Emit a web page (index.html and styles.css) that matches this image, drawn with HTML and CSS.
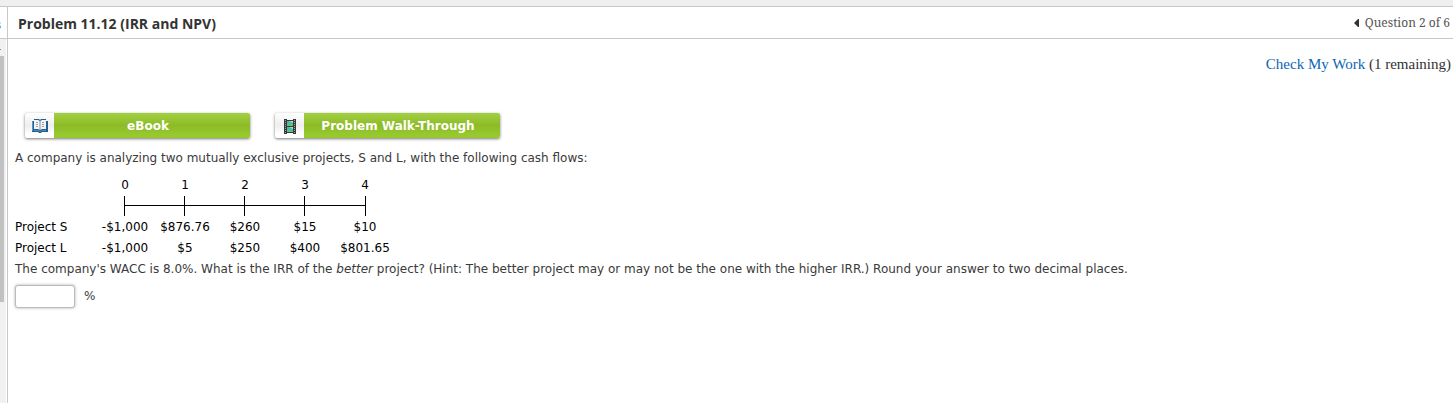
FILE: index.html
```html
<!DOCTYPE html>
<html lang="en">
<head>
<meta charset="utf-8">
<title>Problem 11.12 (IRR and NPV)</title>
<link rel="stylesheet" href="styles.css">
</head>
<body>
<div class="strip"></div>
<div class="frame">
  <aside class="side">
    <div class="side-head"><a href="#" class="side-link">s</a></div>
    <div class="side-track"><div class="side-mark"></div><div class="side-thumb"></div></div>
  </aside>
  <main class="main">
    <header class="head">
      <h1 class="title">Problem 11.12 (IRR and NPV)</h1>
      <nav class="pager">
        <svg class="arrow" width="5" height="8" viewBox="0 0 5 8"><path d="M0 4 4 0H5V8H4Z" fill="#333"/></svg>
        <span>Question 2 of 6</span>
      </nav>
    </header>
    <div class="check"><a href="#" class="check-link">Check My Work</a> (1 remaining)</div>
    <div class="content">
      <div class="actions">
        <button class="action" type="button">
          <span class="action-icon">
            <svg width="16" height="14" viewBox="0 0 16 14">
              <path d="M0 2H2V0H7L8 1 9 0H14V2H16V13H10L9 14H7L6 13H0Z" fill="#235f92"/>
              <path d="M0 2H1V12H0Z" fill="#5b94c0"/>
              <path d="M2 1H6L8 2V11L6 10H2ZM14 1H10L8 2V11L10 10H14Z" fill="#f2f3f4"/>
              <path d="M4 3.500H6M4 5.500H6M4 7.500H6M10 3.500H12M10 5.500H12M10 7.500H12" stroke="#9da1a7"/>
              <path d="M8 2V11" stroke="#8b929b"/>
              <path d="M2 11.500H6L8 12.500 10 11.500H14" fill="none" stroke="#4d88b6"/>
            </svg>
          </span>
          <span class="action-label">eBook</span>
        </button>
        <button class="action" type="button">
          <span class="action-icon">
            <svg width="12" height="15" viewBox="0 0 12 15">
              <path d="M0 0H3V1H9V0H12V15H9V14H3V15H0Z" fill="#3c3838"/>
              <path d="M3 2H9V7H3ZM3 8H9V13H3Z" fill="#45aee6"/>
              <path d="M3 5 5 4 9 6V7H3ZM3 11 5 10 9 12V13H3Z" fill="#4fcf62"/>
              <path d="M5 2H9V4ZM5 8H9V10Z" fill="#c3e36a"/>
              <path d="M1.500 1V14M10.500 1V14" stroke="#a09b9b" stroke-dasharray="1 1"/>
            </svg>
          </span>
          <span class="action-label">Problem Walk-Through</span>
        </button>
      </div>
      <p class="text">A company is analyzing two mutually exclusive projects, S and L, with the following cash flows:</p>
      <table class="flows">
        <thead>
          <tr><td></td><th>0</th><th>1</th><th>2</th><th>3</th><th>4</th></tr>
        </thead>
        <tbody>
          <tr class="axis"><td></td><td colspan="5">
            <svg class="line" width="300" height="21" viewBox="0 0 300 21" shape-rendering="crispEdges"><path d="M29 9.500H271M29.500 0V20M89.500 0V20M149.500 0V20M209.500 0V20M270.500 0V20" stroke="#000" fill="none"/></svg>
          </td></tr>
          <tr><th class="name">Project S</th><td>-$1,000</td><td>$876.76</td><td>$260</td><td>$15</td><td>$10</td></tr>
          <tr><th class="name">Project L</th><td>-$1,000</td><td>$5</td><td>$250</td><td>$400</td><td>$801.65</td></tr>
        </tbody>
      </table>
      <p class="text">The company's WACC is 8.0%. What is the IRR of the <em>better</em> project? (Hint: The better project may or may not be the one with the higher IRR.) Round your answer to two decimal places.</p>
      <div class="answer"><input class="box" id="irr" type="text" aria-label="IRR"><label for="irr">%</label></div>
    </div>
  </main>
</div>
</body>
</html>
```
FILE: styles.css
```css
* { box-sizing: border-box; }
body {
  margin: 0;
  min-height: 100vh;
  display: flex;
  flex-direction: column;
  background: #fff;
  color: #3a3a3a;
  font: 12px/21px Verdana, "DejaVu Sans", sans-serif;
}
.strip { height: 7px; background: #efefef; border-bottom: 1px solid #c8c8c8; }
.frame { flex: 1; display: flex; }
.side {
  flex: none;
  width: 8px;
  border-right: 1px solid #c8c8c8;
  display: flex;
  flex-direction: column;
}
.side-head {
  height: 32px;
  border-bottom: 1px solid #c8c8c8;
  display: flex;
  justify-content: flex-end;
  padding-right: 6px;
  overflow: hidden;
}
.side-link { color: #1a4f8b; font: bold 13px/34px "Open Sans", sans-serif; text-decoration: none; }
.side-track { flex: 1; width: 6px; background: #f1f1f1; padding-top: 10px; }
.side-mark { width: 1px; height: 1px; background: #888; margin-bottom: 6px; }
.side-thumb { width: 4px; height: 246px; background: #c1c1c1; }
.main { flex: 1; min-width: 0; }
.head {
  height: 32px;
  border-bottom: 1px solid #c8c8c8;
  display: flex;
  justify-content: space-between;
  padding: 0 3px 0 10px;
}
.title { margin: 0; font: bold 14px/33px "Open Sans", sans-serif; color: #333; }
.pager { display: flex; align-items: center; gap: 6px; font: 12px/30px "Noto Serif", "DejaVu Serif", serif; color: #555; }
.check { padding: 13px 2px 0 0; text-align: right; font: 15px/24px Georgia, "Liberation Serif", serif; color: #333; }
.check-link { color: #0b66b5; text-decoration: none; }
.content { padding: 37px 7px 0; }
.actions { display: flex; gap: 25px; padding-left: 10px; margin-bottom: 10px; }
.action {
  display: flex;
  width: 225px;
  height: 25px;
  padding: 0;
  border: 0;
  border-radius: 2px;
  overflow: hidden;
  background: linear-gradient(#a3d042, #8cbb27 50%, #97c82e 85%, #97c82e);
  box-shadow: 0 1px 3px #777;
  color: #fff;
  font: bold 12px/27px Verdana, "DejaVu Sans", sans-serif;
}
.action-icon {
  width: 29px;
  height: 25px;
  display: flex;
  align-items: center;
  justify-content: center;
  padding: 1px 0 0 1px;
  background: linear-gradient(#fff, #eee 50%, #fff 85%, #fff);
}
.action-label { flex: 1; padding-right: 8px; }
.text { margin: 0; }
.flows { border-collapse: collapse; table-layout: fixed; width: 380px; margin-top: 6px; color: #000; }
.flows th, .flows td { width: 60px; padding: 0; height: 21px; font-weight: normal; text-align: center; white-space: nowrap; }
.flows tr > :first-child { width: 80px; }
.flows .name { text-align: left; }
.line { display: block; }
.answer { display: flex; align-items: center; gap: 9px; margin-top: 5px; }
.box { width: 60px; height: 23px; border: 1px solid #bbb; border-radius: 3px; box-shadow: 0 0 3px #aaa; background: #fff; font: inherit; }
```
